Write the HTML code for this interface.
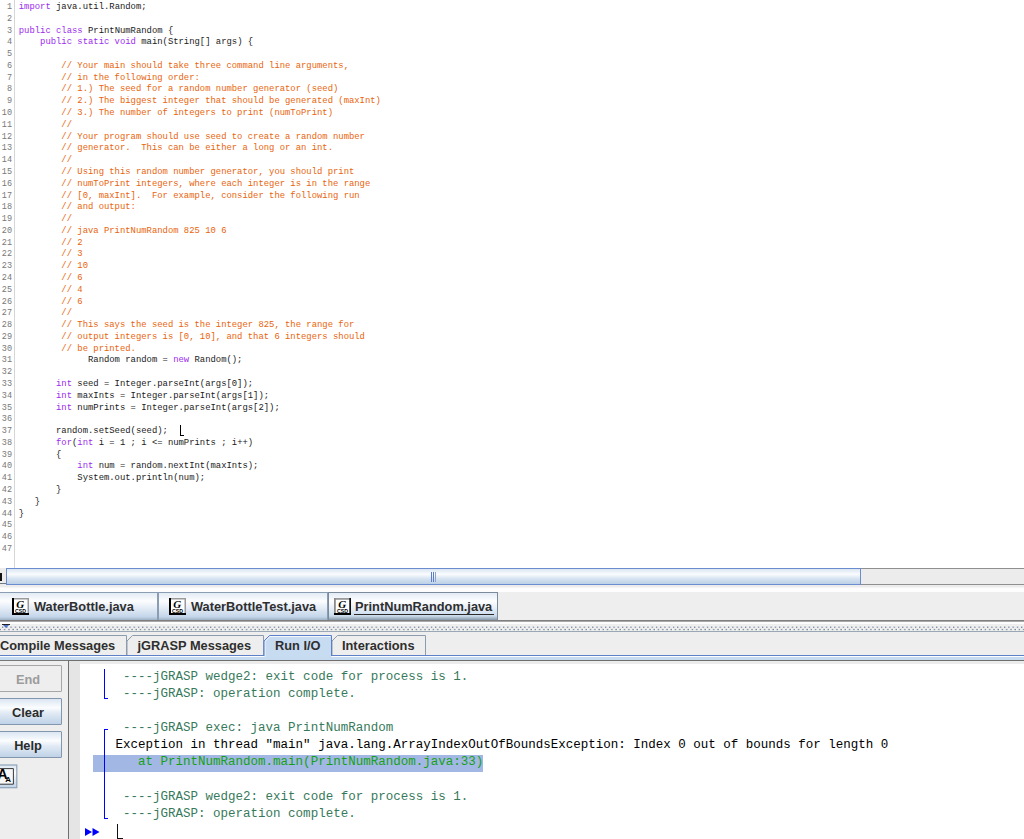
<!DOCTYPE html>
<html><head><meta charset="utf-8">
<style>
*{margin:0;padding:0;box-sizing:border-box}
html,body{width:1024px;height:839px;overflow:hidden;background:#eeeeee;position:relative;font-family:"Liberation Sans",sans-serif}
.abs{position:absolute}
#editor{left:0;top:0;width:1024px;height:568px;background:#fff}
#gutter{left:0;top:0;width:15px;height:568px;border-right:1px solid #d6d6d6;background:#fff}
#lnums{left:0;top:2px;width:12px;font-family:"Liberation Mono",monospace;font-size:8.5px;line-height:11.78px;color:#787878;text-align:right;white-space:pre}
#code{left:18.75px;top:2px;font-family:"Liberation Mono",monospace;font-size:8.9px;line-height:11.78px;color:#1a1a1a;white-space:pre}
.k{color:#9a2cf0}
.c{color:#e9640c}

#sbar{left:0;top:568px;width:1024px;height:17px;background:#ececec}
#strack{left:6px;top:568px;width:1018px;height:17px;border-top:1px solid #8f8f8f;border-bottom:1px solid #8f8f8f;background:#ececec}
#thumb{left:6px;top:568px;width:855px;height:17px;border:1px solid #6b8ccf;background:linear-gradient(#dae6f3 0%,#fafcfe 35%,#d6e3f1 65%,#bcd0e6 100%)}
.grip{top:572px;width:1px;height:10px;background:#5a7cc4}
#gap1{left:0;top:585px;width:1024px;height:7px;background:linear-gradient(#ececec 0,#ececec 2px,#fdfdfd 3px,#fdfdfd 7px)}
#ftabs{left:0;top:592px;width:1024px;height:29px;background:#eeeeee;border-bottom:1px solid #7f7f7f}
.ftab{top:592px;height:28px;border:1px solid #8b9db2;border-bottom:none;background:linear-gradient(#e3ebf4 0%,#fcfdfe 30%,#e4ecf6 55%,#c4d6ea 88%,#9fb1c4 100%)}
.ftab.sel{border-color:#7b8b9c;background:linear-gradient(#e3ebf4 0%,#fdfeff 30%,#e8eff8 55%,#cadbec 85%,#8797a9 100%)}
.ftab span.t{position:absolute;top:6.3px;font-weight:bold;font-size:12.8px;color:#2f2f2f;white-space:nowrap}
.icon{position:absolute;top:5px;width:17px;height:17px;background:#fff;border-left:2px solid #000;border-bottom:2px solid #000;border-top:1px solid #9a9a9a;border-right:2px solid #9a9a9a}
.icon .g{position:absolute;left:2.5px;top:-3.5px;font-family:"Liberation Serif",serif;font-weight:bold;font-style:italic;font-size:11.5px;color:#000}
.icon .csd{position:absolute;left:1.5px;top:6.3px;font-family:"Liberation Sans",sans-serif;font-weight:bold;font-size:6px;line-height:6px;color:#000;letter-spacing:-0.3px;transform:scaleX(0.8);transform-origin:0 0}
#split{left:0;top:621px;width:1024px;height:14px;background:#eeeeee}
#splitw{left:0;top:621px;width:1024px;height:3px;background:linear-gradient(#a8a8a8 0,#a8a8a8 1px,#fdfdfd 1px)}
#dots1{left:0;top:627px;width:1024px;height:1px;background-image:linear-gradient(90deg,#8e9dad 0,#8e9dad 1px,#fafafa 1px,#fafafa 2px,transparent 2px);background-size:4.1px 1px;background-position:2.4px 0}
#dots2{left:0;top:629px;width:1024px;height:1px;background-image:linear-gradient(90deg,#8e9dad 0,#8e9dad 1px,#fafafa 1px,#fafafa 2px,transparent 2px);background-size:4.1px 1px;background-position:0.4px 0}
#splitl{left:0;top:631px;width:1024px;height:1px;background:#9aa7b5}
#tri{left:2px;top:624px;width:0;height:0;border-left:4px solid transparent;border-right:4px solid transparent;border-top:4px solid #4a72c8}
#btabs{left:0;top:635px;width:1024px;height:26px;background:#eeeeee}
#bline{left:0;top:655px;width:1024px;height:1px;background:#5d80c6}
#bwhite{left:0;top:656px;width:1024px;height:1px;background:#fafcff}
#bblue{left:0;top:657px;width:1024px;height:3px;background:#c6daf0}
#bdark{left:0;top:660px;width:1024px;height:1px;background:#777}
.btab{top:635px;height:20px;border-top:1px solid #8d9cad;border-right:1px solid #8d9cad;background:#eeeeee}
.btab span{position:absolute;top:3px;font-weight:bold;font-size:12.8px;color:#2f2f2f;white-space:nowrap}
#panel{left:0;top:661px;width:1024px;height:178px;background:#eeeeee}
.btn{left:-6px;width:68px;height:27px;border:1px solid #8296ae;border-radius:1px;background:linear-gradient(#dbe6f2 0%,#fbfdfe 35%,#e2ebf5 55%,#bfd2e7 100%);text-align:center;font-weight:bold;font-size:12.8px;color:#2b2b2b;line-height:28px}
.btn.dis{border-color:#a6a6a6;background:#eeeeee;color:#9c9c9c}
#out{left:68px;top:660px;width:956px;height:179px;border-left:1px solid #6f6f6f;border-top:1px solid #6f6f6f;background:#fff}
#outg{left:69px;top:661px;width:11px;height:178px;background:#e5e5e5}
#outtop{left:69px;top:661px;width:955px;height:3px;background:#ececec}
#outtext{left:115.6px;top:668.5px;font-family:"Liberation Mono",monospace;font-size:12.5px;line-height:17.15px;white-space:pre;color:#000}
.gm{color:#377a5b}
.gr{color:#16a016}
#hl{left:93px;top:755px;width:390px;height:17px;background:#a3b7e4}
</style></head><body>
<div id="editor" class="abs">
<div id="gutter" class="abs"></div>
<div id="lnums" class="abs">1
2
3
4
5
6
7
8
9
10
11
12
13
14
15
16
17
18
19
20
21
22
23
24
25
26
27
28
29
30
31
32
33
34
35
36
37
38
39
40
41
42
43
44
45
46
47</div>
<div id="code" class="abs"><span class="k">import</span> java.util.Random;

<span class="k">public class</span> PrintNumRandom {
    <span class="k">public static void</span> main(String[] args) {

        <span class="c">// Your main should take three command line arguments,</span>
        <span class="c">// in the following order:</span>
        <span class="c">// 1.) The seed for a random number generator (seed)</span>
        <span class="c">// 2.) The biggest integer that should be generated (maxInt)</span>
        <span class="c">// 3.) The number of integers to print (numToPrint)</span>
        <span class="c">//</span>
        <span class="c">// Your program should use seed to create a random number</span>
        <span class="c">// generator.  This can be either a long or an int.</span>
        <span class="c">//</span>
        <span class="c">// Using this random number generator, you should print</span>
        <span class="c">// numToPrint integers, where each integer is in the range</span>
        <span class="c">// [0, maxInt].  For example, consider the following run</span>
        <span class="c">// and output:</span>
        <span class="c">//</span>
        <span class="c">// java PrintNumRandom 825 10 6</span>
        <span class="c">// 2</span>
        <span class="c">// 3</span>
        <span class="c">// 10</span>
        <span class="c">// 6</span>
        <span class="c">// 4</span>
        <span class="c">// 6</span>
        <span class="c">//</span>
        <span class="c">// This says the seed is the integer 825, the range for</span>
        <span class="c">// output integers is [0, 10], and that 6 integers should</span>
        <span class="c">// be printed.</span>
             Random random = <span class="k">new</span> Random();

       <span class="k">int</span> seed = Integer.parseInt(args[0]);
       <span class="k">int</span> maxInts = Integer.parseInt(args[1]);
       <span class="k">int</span> numPrints = Integer.parseInt(args[2]);

       random.setSeed(seed);
       <span class="k">for</span>(<span class="k">int</span> i = 1 ; i &lt;= numPrints ; i++)
       {
           <span class="k">int</span> num = random.nextInt(maxInts);
           System.out.println(num);
       }
   }
}</div>
<div class="abs" style="left:180px;top:425px;width:1.2px;height:11px;background:#000"></div>
<div class="abs" style="left:180px;top:435px;width:4px;height:1px;background:#000"></div>
</div>

<div id="sbar" class="abs"></div>
<div class="abs" style="left:0;top:573px;width:1.5px;height:8px;background:#111"></div>
<div class="abs" style="left:0;top:583px;width:6px;height:1px;background:#6f7a85"></div>
<div id="strack" class="abs"></div>
<div id="thumb" class="abs"></div>
<div class="grip abs" style="left:431px"></div>
<div class="grip abs" style="left:433px"></div>
<div class="grip abs" style="left:435px;background:#8aa2d4"></div>
<div id="gap1" class="abs"></div>
<div id="ftabs" class="abs"></div>
<div class="ftab abs" style="left:-1px;width:159px"><svg style="position:absolute;left:12px;top:4.5px" width="17" height="17"><rect width="17" height="17" fill="#fff"/><rect x="0" y="0" width="17" height="1.5" fill="#9a9a9a"/><rect x="15.5" y="0" width="1.5" height="17" fill="#9a9a9a"/><rect x="0" y="0" width="2" height="17" fill="#000"/><rect x="0" y="15" width="17" height="2" fill="#000"/><text x="4.2" y="9.6" font-family="Liberation Serif" font-weight="bold" font-style="italic" font-size="11" fill="#000">G</text><text x="3" y="15" font-family="Liberation Sans" font-weight="bold" font-size="5.2" textLength="11" lengthAdjust="spacingAndGlyphs" fill="#000">CSD</text></svg><span class="t" style="left:34px">WaterBottle.java</span></div>
<div class="ftab abs" style="left:158px;width:170px"><svg style="position:absolute;left:10px;top:4.5px" width="17" height="17"><rect width="17" height="17" fill="#fff"/><rect x="0" y="0" width="17" height="1.5" fill="#9a9a9a"/><rect x="15.5" y="0" width="1.5" height="17" fill="#9a9a9a"/><rect x="0" y="0" width="2" height="17" fill="#000"/><rect x="0" y="15" width="17" height="2" fill="#000"/><text x="4.2" y="9.6" font-family="Liberation Serif" font-weight="bold" font-style="italic" font-size="11" fill="#000">G</text><text x="3" y="15" font-family="Liberation Sans" font-weight="bold" font-size="5.2" textLength="11" lengthAdjust="spacingAndGlyphs" fill="#000">CSD</text></svg><span class="t" style="left:32px">WaterBottleTest.java</span></div>
<div class="ftab sel abs" style="left:328px;width:170px"><svg style="position:absolute;left:5px;top:4.5px" width="17" height="17"><rect width="17" height="17" fill="#fff"/><rect x="0" y="0" width="17" height="1.8" fill="#9a9a9a"/><rect x="0" y="0" width="1.8" height="17" fill="#8a8a8a"/><rect x="15.3" y="0" width="1.7" height="17" fill="#111"/><rect x="0" y="15" width="17" height="2" fill="#000"/><text x="4.2" y="9.6" font-family="Liberation Serif" font-weight="bold" font-style="italic" font-size="11" fill="#000">G</text><text x="3" y="15" font-family="Liberation Sans" font-weight="bold" font-size="5.2" textLength="11" lengthAdjust="spacingAndGlyphs" fill="#000">CSD</text></svg><span class="t" style="left:26px">PrintNumRandom.java</span><div style="position:absolute;left:25px;top:20.8px;width:140px;height:1.5px;background:#2a2a2a"></div></div>
<div id="split" class="abs"></div>
<div id="splitw" class="abs"></div>
<svg class="abs" style="left:0;top:624px" width="1024" height="8"><defs>
<pattern id="p1" x="2.0" y="0" width="4.246" height="8" patternUnits="userSpaceOnUse">
<rect x="0" y="1.6" width="1.2" height="0.9" fill="#ffffff"/>
<rect x="0" y="2.5" width="1.2" height="1.4" fill="#74849a"/>
<rect x="2.12" y="4.9" width="1.2" height="1.3" fill="#5a6a7c"/>
<rect x="3.3" y="4.9" width="0.9" height="1.3" fill="#fbfbfb"/>
</pattern></defs><rect width="1024" height="8" fill="url(#p1)"/></svg>
<div id="splitl" class="abs"></div>
<div id="tri" class="abs"></div><div class="abs" style="left:2px;top:623.5px;width:8px;height:1px;background:#222"></div>
<div id="btabs" class="abs"></div>
<svg class="abs" style="left:0;top:630px" width="1024" height="31" viewBox="0 630 1024 31">
<path d="M264 661 V641 L269.5 635.5 H331.5 V661 Z" fill="#c8dcf1"/>
<path d="M0 655.5 H264 M331.5 655.5 H1024" stroke="#5d80c6" stroke-width="1"/>
<path d="M0 656.5 H264 M331.5 656.5 H1024" stroke="#fafcff" stroke-width="1"/>
<rect x="0" y="657" width="1024" height="3" fill="#c6daf0"/>
<path d="M0 635.5 H126.5 V655" fill="none" stroke="#8d9cad" stroke-width="1"/>
<path d="M127 655 V641 L132.5 635.5 H263.5 V655" fill="none" stroke="#8d9cad" stroke-width="1"/>
<path d="M332 655 V641 L337.5 635.5 H425.5 V655" fill="none" stroke="#8d9cad" stroke-width="1"/>
<path d="M265 657 V641.5 L270 636.5 H330.5" fill="none" stroke="#f4f8fd" stroke-width="1"/>
<path d="M264 656 V641 L269.5 635.5 H331.5 V656" fill="none" stroke="#5b7fcb" stroke-width="1"/>
</svg>
<span class="abs" style="left:0px;top:638.4px;font-weight:bold;font-size:12.8px;color:#2f2f2f;white-space:nowrap">Compile Messages</span>
<span class="abs" style="left:137.5px;top:638.4px;font-weight:bold;font-size:12.8px;color:#2f2f2f;white-space:nowrap">jGRASP Messages</span>
<span class="abs" style="left:275px;top:638.4px;font-weight:bold;font-size:12.8px;color:#2f2f2f;white-space:nowrap">Run I/O</span>
<span class="abs" style="left:342px;top:638.4px;font-weight:bold;font-size:12.8px;color:#2f2f2f;white-space:nowrap">Interactions</span>
<div id="bdark" class="abs"></div>
<div id="panel" class="abs"></div>
<div class="btn dis abs" style="top:665px">End</div>
<div class="btn abs" style="top:698px">Clear</div>
<div class="btn abs" style="top:731px">Help</div>
<svg class="abs" style="left:0;top:762px" width="20" height="28" viewBox="0 762 20 28">
<defs><linearGradient id="ag" x1="0" y1="0" x2="0" y2="1"><stop offset="0" stop-color="#dbe6f2"/><stop offset="0.35" stop-color="#fbfdfe"/><stop offset="0.6" stop-color="#e2ebf5"/><stop offset="1" stop-color="#bfd2e7"/></linearGradient></defs>
<rect x="-4" y="765" width="20.8" height="22.7" fill="url(#ag)" stroke="#8fa2b8" stroke-width="1.2"/>
<rect x="-2" y="768.3" width="15.5" height="16" fill="#f7f7f7"/>
<path d="M-2 768.6 H13.4 V784.2 H-2" fill="none" stroke="#222" stroke-width="0.9"/>
<text x="-2.6" y="779.2" font-family="Liberation Sans" font-weight="bold" font-size="14" fill="#000">A</text>
<text x="5.3" y="782.3" font-family="Liberation Sans" font-weight="bold" font-size="8" fill="#000">A</text>
</svg>
<div id="out" class="abs"></div>
<div id="outtop" class="abs"></div>
<div id="outg" class="abs"></div>
<div id="hl" class="abs"></div>
<div class="abs" style="left:104px;top:669px;width:1.3px;height:30px;background:#0000ff"></div>
<div class="abs" style="left:104px;top:697.5px;width:4px;height:1.3px;background:#0000ff"></div>
<div class="abs" style="left:104px;top:729px;width:1.3px;height:90px;background:#0000ff"></div>
<div class="abs" style="left:104px;top:729px;width:4px;height:1.3px;background:#0000ff"></div>
<div class="abs" style="left:104px;top:817.5px;width:4px;height:1.3px;background:#0000ff"></div>
<div id="outtext" class="abs"><span class="gm"> ----jGRASP wedge2: exit code for process is 1.
 ----jGRASP: operation complete.

 ----jGRASP exec: java PrintNumRandom</span>
Exception in thread "main" java.lang.ArrayIndexOutOfBoundsException: Index 0 out of bounds for length 0
<span class="gr">   at PrintNumRandom.main(PrintNumRandom.java:33)</span>

<span class="gm"> ----jGRASP wedge2: exit code for process is 1.
 ----jGRASP: operation complete.</span></div>
<svg class="abs" style="left:85px;top:828px" width="16" height="9"><path d="M0 0 L7 4 L0 8 Z M7.5 0 L14.5 4 L7.5 8 Z" fill="#0000ff"/></svg>
<div class="abs" style="left:117px;top:823.5px;width:1.3px;height:15px;background:#111"></div>
<div class="abs" style="left:117px;top:837.5px;width:5.5px;height:1.3px;background:#111"></div>
</body></html>
